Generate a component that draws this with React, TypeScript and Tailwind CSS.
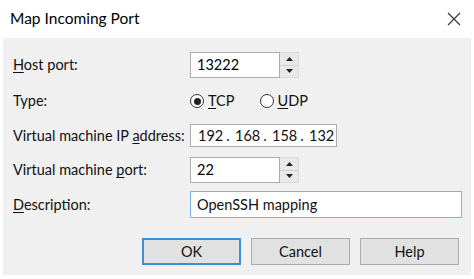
const font = { fontFamily: '"Segoe UI", Lato, "Noto Sans", sans-serif' };

const SpinBox = ({ value }: { value: string }) => (
  <div className="flex h-[26px]">
    <div className="flex w-[90px] items-center border border-[#adadad] bg-white pl-[6px] text-black">
      {value}
    </div>
    <div className="flex w-[19px] flex-col border border-l-0 border-[#d9d9d9] bg-[#e9e9e9]">
      <div className="flex flex-1 items-center justify-center border-b border-[#d0d0d0]">
        <svg width="7" height="4" viewBox="0 0 7 4"><path d="M0 4 L3.5 0 L7 4 Z" fill="#222" /></svg>
      </div>
      <div className="flex flex-1 items-center justify-center">
        <svg width="7" height="4" viewBox="0 0 7 4"><path d="M0 0 L3.5 4 L7 0 Z" fill="#222" /></svg>
      </div>
    </div>
  </div>
);

const Radio = ({ checked, label, u }: { checked?: boolean; label: string; u: string }) => (
  <div className="flex items-center gap-[4px]">
    <div className="flex h-[14px] w-[14px] items-center justify-center rounded-full border border-[#333] bg-white">
      {checked && <div className="h-[7px] w-[7px] rounded-full bg-[#222]" />}
    </div>
    <span>
      <span className="underline underline-offset-2">{u}</span>
      {label.slice(1)}
    </span>
  </div>
);

const Button = ({ label, primary }: { label: string; primary?: boolean }) => (
  <div
    className={
      'flex h-[27px] w-[99px] items-center justify-center bg-[#e1e1e1] ' +
      (primary ? 'border-2 border-[#3c8fd6]' : 'border border-[#adadad]')
    }
  >
    {label}
  </div>
);

const Label = ({ children }: { children: React.ReactNode }) => (
  <span className="w-[177px] shrink-0 whitespace-nowrap">{children}</span>
);

const octets = ['192', '168', '158', '132'];

export default function App() {
  return (
    <div className="flex h-[279px] w-[474px] flex-col bg-white text-[14.5px] text-[#111]" style={font}>
      <div className="flex h-[38px] items-center justify-between pl-[10px] pr-[12px]">
        <span className="text-[15.5px] text-black">Map Incoming Port</span>
        <svg width="14" height="14" viewBox="0 0 14 14" className="mr-[1px]">
          <path d="M1 1 L13 13 M13 1 L1 13" stroke="#333" strokeWidth="1.1" />
        </svg>
      </div>

      <div className="mx-[3px] flex h-[237px] flex-col bg-[#f0f0f0] pl-[10px] pt-[14px]">
        <div className="flex items-center">
          <Label><span className="underline underline-offset-2">H</span>ost port:</Label>
          <SpinBox value="13222" />
        </div>

        <div className="mt-[12px] flex h-[22px] items-center">
          <Label>Type:</Label>
          <div className="flex gap-[25px]">
            <Radio checked label="TCP" u="T" />
            <Radio label="UDP" u="U" />
          </div>
        </div>

        <div className="mt-[12px] flex items-center">
          <Label>Virtual machine IP <span className="underline underline-offset-2">a</span>ddress:</Label>
          <div className="flex h-[23px] w-[147px] items-center border border-[#adadad] bg-white pl-[7px]">
            {octets.map((o, i) => (
              <div key={o + i} className="flex">
                <span className="w-[23px] text-center">{o}</span>
                {i < 3 && <span className="w-[14px] text-center">.</span>}
              </div>
            ))}
          </div>
        </div>

        <div className="mt-[10px] flex items-center">
          <Label>Virtual machine <span className="underline underline-offset-2">p</span>ort:</Label>
          <SpinBox value="22" />
        </div>

        <div className="mt-[8px] flex items-center">
          <Label><span className="underline underline-offset-2">D</span>escription:</Label>
          <div className="flex h-[27px] w-[272px] items-center border border-[#7eb4ea] bg-white pl-[6px]">
            OpenSSH mapping
          </div>
        </div>

        <div className="mt-[20px] flex gap-[10px] pl-[129px]">
          <Button label="OK" primary />
          <Button label="Cancel" />
          <Button label="Help" />
        </div>
      </div>
    </div>
  );
}
